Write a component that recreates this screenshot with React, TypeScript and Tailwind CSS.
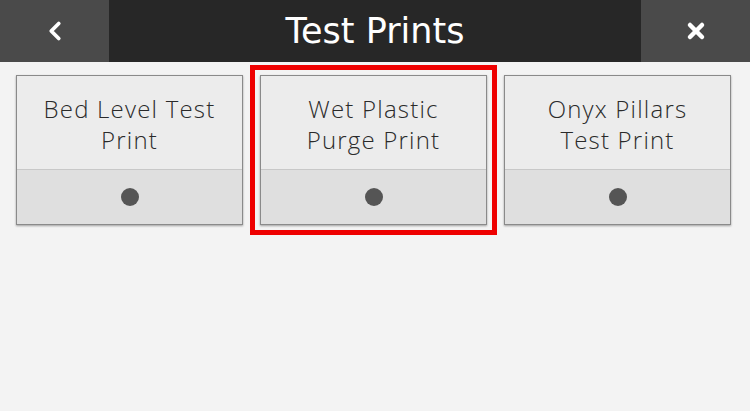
import { ChevronLeft, X } from "lucide-react";

interface PrintItem {
  lines: string[];
  selected?: boolean;
}

const PRINTS: PrintItem[] = [
  { lines: ["Bed Level Test", "Print"] },
  { lines: ["Wet Plastic", "Purge Print"], selected: true },
  { lines: ["Onyx Pillars", "Test Print"] },
];

export default function App() {
  return (
    <div
      className="flex flex-col w-[750px] h-[411px] bg-[#f3f3f3] overflow-hidden"
      style={{ fontFamily: '"DejaVu Sans", sans-serif' }}
    >
      {/* Header */}
      <div className="flex h-[62px] shrink-0 bg-[#272727]">
        <button className="w-[109px] flex items-center justify-center bg-[#4a4a4a] text-white">
          <ChevronLeft size={30} strokeWidth={3} />
        </button>
        <div className="flex-1 flex items-center justify-center text-white text-[35px] font-normal">
          Test Prints
        </div>
        <button className="w-[109px] flex items-center justify-center bg-[#4a4a4a] text-white">
          <X size={24} strokeWidth={4.5} />
        </button>
      </div>

      {/* Cards */}
      <div className="grid grid-cols-[227px_227px_227px] gap-[17px] pl-[16px] pt-[13px]">
        {PRINTS.map((p) => (
          <button
            key={p.lines.join(" ")}
            className={
              "flex flex-col h-[150px] rounded-none border border-[#8a8a8a] bg-[#ececec] shadow-[0_1px_2px_rgba(0,0,0,0.35)] overflow-hidden " +
              (p.selected ? "outline-[5px] outline-solid outline-[#ee0000] outline-offset-[5px]" : "")
            }
          >
            <div
              className="h-[94px] pt-[3px] flex flex-col items-center justify-center text-[#2a2a2a] text-[24px] font-light tracking-[1.2px] leading-[31px] border-b border-[#c8c8c8]"
              style={{ fontFamily: '"Open Sans", sans-serif' }}
            >
              {p.lines.map((l) => (
                <span key={l}>{l}</span>
              ))}
            </div>
            <div className="flex-1 flex items-center justify-center bg-[#dfdfdf]">
              <span className="w-[18px] h-[18px] rounded-full bg-[#555]" />
            </div>
          </button>
        ))}
      </div>
    </div>
  );
}
